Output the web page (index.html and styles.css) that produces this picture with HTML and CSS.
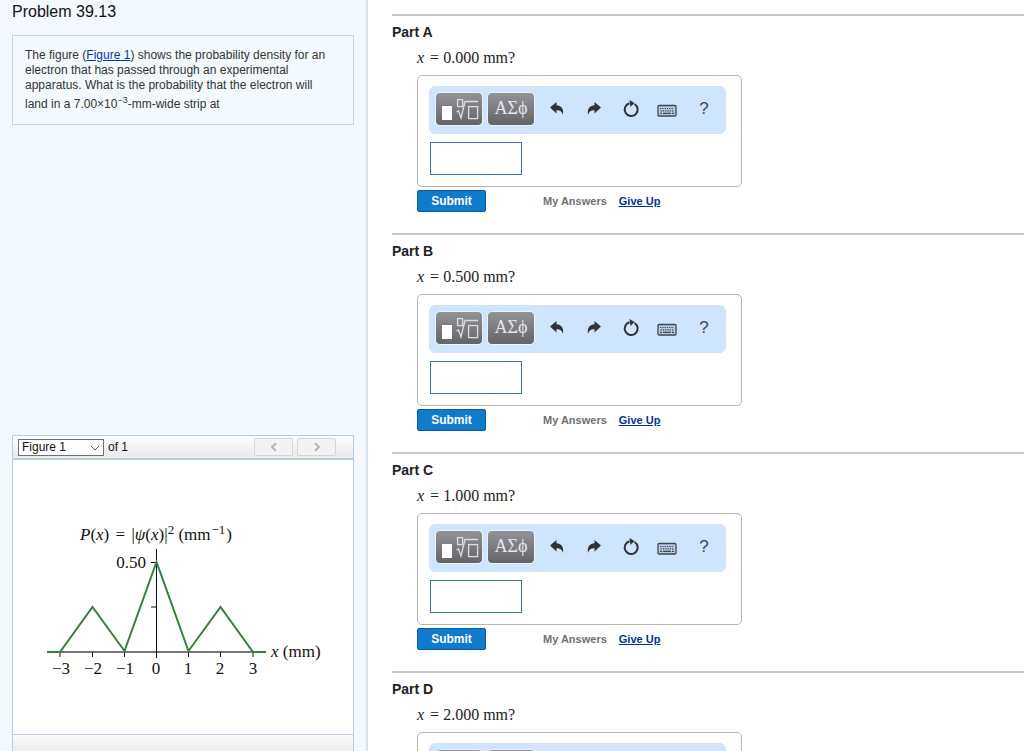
FILE: index.html
```html
<!DOCTYPE html>
<html lang="en">
<head>
    <meta charset="UTF-8">
    <meta name="viewport" content="width=device-width, initial-scale=1.0">
    <title>Problem 39.13</title>
    <link rel="stylesheet" href="styles.css">
</head>
<body>
    <!-- Shared icons -->
    <svg class="icon-defs" aria-hidden="true">
        <symbol id="icon-template" viewBox="0 0 40 26">
            <rect x="3" y="10" width="10" height="14" fill="#fff"/>
            <g fill="none" stroke="#dcdce0" stroke-width="1.3">
                <rect x="18.600" y="3.600" width="5" height="7"/>
                <path d="M17.500 16l2-1 2.500 7 4-16.500h13"/>
                <rect x="29.600" y="10.600" width="9" height="12"/>
            </g>
        </symbol>
        <symbol id="icon-undo" viewBox="0 0 20 20">
            <path d="M3 8.500L9.500 3v3.200c4.500.3 7.500 2.800 6.500 9.800-1-3.500-3-4.800-6.500-4.800v3.300z" fill="#333"/>
        </symbol>
        <symbol id="icon-redo" viewBox="0 0 20 20">
            <path d="M17 8.500L10.500 3v3.200C6 6.500 3 9 4 16c1-3.500 3-4.800 6.500-4.800v3.300z" fill="#333"/>
        </symbol>
        <symbol id="icon-reset" viewBox="0 0 20 20">
            <path d="M13.500 5A6.500 6.500 0 1 1 8.500 4.300" fill="none" stroke="#333" stroke-width="2"/>
            <path d="M8.500 1l5 3-4 4z" fill="#333"/>
        </symbol>
        <symbol id="icon-keyboard" viewBox="0 0 20 20">
            <rect x="1" y="6.500" width="18" height="10.500" rx="1" fill="#b9cbe0" stroke="#3f4850" stroke-width="1.300"/>
            <path d="M3 9.500h14M3.500 11.800h13" stroke="#3f4850" stroke-width="1.200" stroke-dasharray="1.300 1"/>
            <path d="M3 14.300h2M6 14.300h8M15 14.300h2" stroke="#3f4850" stroke-width="1.200"/>
        </symbol>
    </svg>

    <div class="page">
        <div class="sidebar">
            <h1>Problem 39.13</h1>
            <div class="problem">
                The figure (<a href="#figure">Figure 1</a>) shows the probability density for an electron that has passed through an experimental apparatus. What is the probability that the electron will land in a 7.00×10<sup>−3</sup>-mm-wide strip at
            </div>

            <div class="figure" id="figure">
                <div class="figure-header">
                    <div class="select-wrap">
                        <select id="figureSelect" aria-label="Figure">
                            <option>Figure 1</option>
                        </select>
                        <svg class="chevron" viewBox="0 0 10 6"><path d="M1 1l4 4 4-4" fill="none" stroke="#555"/></svg>
                    </div>
                    <label for="figureSelect">of 1</label>
                    <div class="figure-nav">
                        <button type="button" aria-label="Previous" disabled><svg viewBox="0 0 8 8"><path d="M5.500 1l-3 3 3 3" fill="none" stroke="#b5b5b5" stroke-width="1.600"/></svg></button>
                        <button type="button" aria-label="Next" disabled><svg viewBox="0 0 8 8"><path d="M2.500 1l3 3-3 3" fill="none" stroke="#b5b5b5" stroke-width="1.600"/></svg></button>
                    </div>
                </div>
                <div class="figure-body">
                    <svg class="graph" width="340" height="274" viewBox="0 0 340 274">
                        <text x="67" y="80"><tspan class="var">P</tspan>(<tspan class="var">x</tspan>)<tspan dx="2"> = </tspan><tspan dx="2">|</tspan><tspan class="var">ψ</tspan>(<tspan class="var">x</tspan>)|<tspan class="exp" dy="-6">2</tspan><tspan dy="6"> (mm</tspan><tspan class="exp" dx="1" dy="-6">−1</tspan><tspan dx="1" dy="6">)</tspan></text>
                        <!-- Axes and ticks -->
                        <path class="axis-x" d="M34 192H253"/>
                        <path class="axis" d="M143.500 89V198M138 102.500H144M138 147H144M47 192V197M79.500 192V197M111.500 192V197M175.500 192V197M207.500 192V197M240 192V197"/>
                        <!-- Probability density -->
                        <path class="curve" d="M34 192H47L79.500 147L111.500 191L143.500 102L175.500 191L207.500 147L240 192H253"/>
                        <text x="133" y="108" text-anchor="end">0.50</text>
                        <text x="258" y="197"><tspan class="var">x</tspan> (mm)</text>
                        <g text-anchor="middle">
                            <text x="48" y="214">−3</text>
                            <text x="80" y="214">−2</text>
                            <text x="112" y="214">−1</text>
                            <text x="143" y="214">0</text>
                            <text x="175" y="214">1</text>
                            <text x="207" y="214">2</text>
                            <text x="240" y="214">3</text>
                        </g>
                    </svg>
                </div>
                <div class="figure-footer"></div>
            </div>
        </div>

        <div class="main">
            <form class="part">
                <h2>Part A</h2>
                <div class="part-content">
                    <label class="question" for="answerA"><i>x</i> = 0.000 mm?</label>
                    <div class="answer-box">
                        <div class="toolbar">
                            <button type="button" class="tool" aria-label="Templates"><svg><use href="#icon-template"/></svg></button>
                            <button type="button" class="tool">ΑΣϕ</button>
                            <div class="actions">
                                <button type="button" aria-label="Undo"><svg><use href="#icon-undo"/></svg></button>
                                <button type="button" aria-label="Redo"><svg><use href="#icon-redo"/></svg></button>
                                <button type="button" aria-label="Reset"><svg><use href="#icon-reset"/></svg></button>
                                <button type="button" aria-label="Keyboard"><svg><use href="#icon-keyboard"/></svg></button>
                                <button type="button">?</button>
                            </div>
                        </div>
                        <input type="text" id="answerA">
                    </div>
                    <div class="submit-row">
                        <button type="submit" class="submit">Submit</button>
                        <span class="my-answers">My Answers</span>
                        <a href="#">Give Up</a>
                    </div>
                </div>
            </form>

            <form class="part">
                <h2>Part B</h2>
                <div class="part-content">
                    <label class="question" for="answerB"><i>x</i> = 0.500 mm?</label>
                    <div class="answer-box">
                        <div class="toolbar">
                            <button type="button" class="tool" aria-label="Templates"><svg><use href="#icon-template"/></svg></button>
                            <button type="button" class="tool">ΑΣϕ</button>
                            <div class="actions">
                                <button type="button" aria-label="Undo"><svg><use href="#icon-undo"/></svg></button>
                                <button type="button" aria-label="Redo"><svg><use href="#icon-redo"/></svg></button>
                                <button type="button" aria-label="Reset"><svg><use href="#icon-reset"/></svg></button>
                                <button type="button" aria-label="Keyboard"><svg><use href="#icon-keyboard"/></svg></button>
                                <button type="button">?</button>
                            </div>
                        </div>
                        <input type="text" id="answerB">
                    </div>
                    <div class="submit-row">
                        <button type="submit" class="submit">Submit</button>
                        <span class="my-answers">My Answers</span>
                        <a href="#">Give Up</a>
                    </div>
                </div>
            </form>

            <form class="part">
                <h2>Part C</h2>
                <div class="part-content">
                    <label class="question" for="answerC"><i>x</i> = 1.000 mm?</label>
                    <div class="answer-box">
                        <div class="toolbar">
                            <button type="button" class="tool" aria-label="Templates"><svg><use href="#icon-template"/></svg></button>
                            <button type="button" class="tool">ΑΣϕ</button>
                            <div class="actions">
                                <button type="button" aria-label="Undo"><svg><use href="#icon-undo"/></svg></button>
                                <button type="button" aria-label="Redo"><svg><use href="#icon-redo"/></svg></button>
                                <button type="button" aria-label="Reset"><svg><use href="#icon-reset"/></svg></button>
                                <button type="button" aria-label="Keyboard"><svg><use href="#icon-keyboard"/></svg></button>
                                <button type="button">?</button>
                            </div>
                        </div>
                        <input type="text" id="answerC">
                    </div>
                    <div class="submit-row">
                        <button type="submit" class="submit">Submit</button>
                        <span class="my-answers">My Answers</span>
                        <a href="#">Give Up</a>
                    </div>
                </div>
            </form>

            <form class="part">
                <h2>Part D</h2>
                <div class="part-content">
                    <label class="question" for="answerD"><i>x</i> = 2.000 mm?</label>
                    <div class="answer-box">
                        <div class="toolbar">
                            <button type="button" class="tool" aria-label="Templates"></button>
                            <button type="button" class="tool" aria-label="Symbols"></button>
                        </div>
                        <input type="text" id="answerD">
                    </div>
                </div>
            </form>
        </div>
    </div>
</body>
</html>
```
FILE: styles.css
```css
* {
    margin: 0;
    padding: 0;
    box-sizing: border-box;
}

body {
    font-family: "Liberation Sans", Arial, sans-serif;
    font-size: 12px;
    color: #333;
    background-color: #fff;
}

a {
    color: #003399;
}

button {
    font-family: inherit;
    cursor: pointer;
}

.icon-defs {
    display: none;
}

.page {
    display: flex;
    height: 100vh;
}

.sidebar {
    display: flex;
    flex-direction: column;
    flex: 0 0 368px;
    padding: 0 12px;
    background-color: #f4f9ff;
    border-right: 2px solid #d5e2f0;
    overflow: hidden;
}

.sidebar h1 {
    font-size: 16px;
    font-weight: normal;
    line-height: 24px;
    color: #111;
    margin-bottom: 11px;
}

.problem {
    padding: 12px 24px 12px 12px;
    line-height: 15px;
    border: 1px solid #c3d3e4;
}

.problem a {
    color: #0038b0;
}

.problem sup {
    font-size: 9px;
}

/* Figure panel */
.figure {
    margin-top: auto;
    border: 1px solid #b9cde2;
    border-bottom: none;
    background-color: #fff;
}

.figure-header {
    display: flex;
    align-items: center;
    gap: 4px;
    height: 24px;
    padding: 0 17px 0 5px;
    color: #111;
    background: linear-gradient(#fff, #e9e9e9);
    border-bottom: 2px solid #b9cde2;
}

.select-wrap {
    position: relative;
}

.select-wrap select {
    display: block;
    appearance: none;
    width: 86px;
    height: 17px;
    padding-left: 3px;
    font-family: inherit;
    font-size: 12px;
    color: #111;
    background-color: #fff;
    border: 1px solid #707070;
    border-radius: 0;
}

.chevron {
    position: absolute;
    right: 4px;
    top: 6px;
    width: 10px;
    height: 6px;
    pointer-events: none;
}

.figure-nav {
    display: flex;
    gap: 4px;
    margin-left: auto;
}

.figure-nav button {
    width: 39px;
    height: 18px;
    background-color: #f3f3f3;
    border: 1px solid #d6d6d6;
    border-radius: 2px;
}

.figure-nav svg {
    display: block;
    width: 10px;
    height: 10px;
    margin: 0 auto;
}

.figure-body {
    height: 275px;
    border-bottom: 1px solid #b9cde2;
}

.graph {
    display: block;
    font-family: "Liberation Serif", serif;
    font-size: 17px;
    fill: #111;
}

.graph .var {
    font-style: italic;
}

.graph .exp {
    font-size: 13px;
}

.graph .axis,
.graph .axis-x,
.graph .curve {
    fill: none;
    stroke: #111;
    stroke-width: 1;
}

.graph .axis-x {
    stroke: #777;
    stroke-width: 2;
}

.graph .curve {
    stroke: #37803d;
    stroke-width: 2;
}

.figure-footer {
    height: 16px;
    background: linear-gradient(#fbfbfb, #ededed);
}

/* Question parts */
.main {
    flex: 1;
    padding: 14px 0 0 24px;
    overflow: hidden;
}

.part {
    border-top: 2px solid #c8c8c8;
    padding-bottom: 21px;
}

.part h2 {
    font-size: 14px;
    line-height: 16px;
    color: #222;
    padding-top: 8px;
}

.part-content {
    padding: 8px 0 0 25px;
}

.question {
    display: block;
    font-family: "Liberation Serif", serif;
    font-size: 16px;
    line-height: 18px;
    color: #222;
    padding-top: 1px;
    margin-bottom: 8px;
}

.question i {
    margin-right: 2px;
}

.answer-box {
    max-width: 325px;
    height: 112px;
    padding: 10px 15px 10px 11px;
    border: 1px solid #b5b5b5;
    border-radius: 5px;
}

.toolbar {
    display: flex;
    align-items: center;
    gap: 4px;
    height: 48px;
    padding: 0 11px 3px 5px;
    background-color: #cfe5ff;
    border: 1px solid #d9e2ec;
    border-radius: 6px;
}

.tool {
    width: 48px;
    height: 34px;
    font-family: "Liberation Serif", serif;
    font-size: 18px;
    color: #e6e6ea;
    background: linear-gradient(#92929a, #646467);
    border: 1px solid #eef3fa;
    border-radius: 5px;
}

.tool svg {
    display: block;
    width: 40px;
    height: 26px;
    margin: 0 auto;
}

.actions {
    display: flex;
    flex: 1;
    justify-content: space-between;
    padding-left: 8px;
}

.actions button {
    width: 20px;
    height: 20px;
    font-size: 17px;
    line-height: 20px;
    color: #444;
    background: none;
    border: none;
}

.actions svg {
    display: block;
    width: 20px;
    height: 20px;
}

.answer-box input {
    display: block;
    width: 92px;
    height: 33px;
    margin: 8px 0 0 1px;
    padding: 0 6px;
    font-size: 14px;
    border: 1px solid #3a6bd0;
}

.submit-row {
    display: flex;
    align-items: center;
    padding-top: 3px;
    font-size: 11px;
    font-weight: bold;
}

.submit {
    width: 69px;
    height: 22px;
    font-size: 12px;
    font-weight: bold;
    color: #fff;
    background-color: #107acc;
    border: 1px solid #0b5c9e;
    border-radius: 2px;
}

.my-answers {
    margin: 0 12px 0 57px;
    color: #707070;
}
```
